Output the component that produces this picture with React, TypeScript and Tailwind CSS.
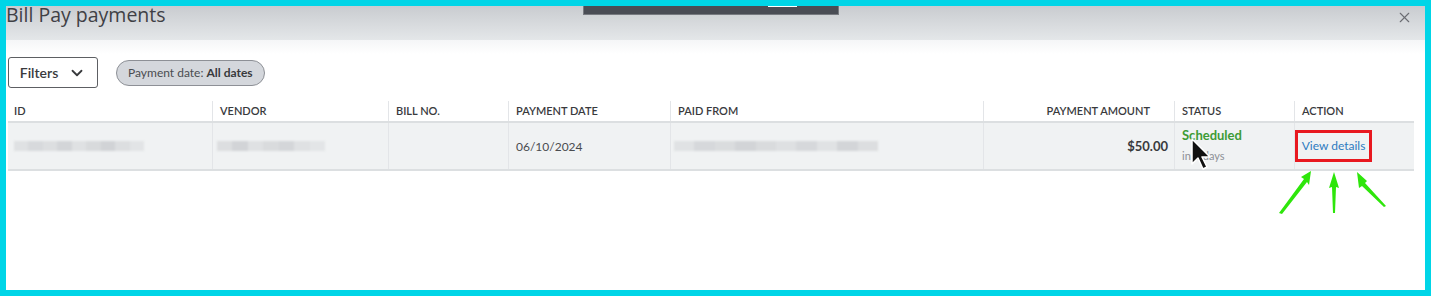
import { X, ChevronDown } from "lucide-react"

const cols = "grid grid-cols-[204px_176px_120px_162px_313px_191px_120px_120px]"

function Blur({ w, shades }: { w: number; shades: string[] }) {
	return (
		<div className="flex h-[10px] blur-[1px]" style={{ width: w }}>
			{shades.map((s, i) => (
				<div key={i} className="h-full flex-1" style={{ backgroundColor: s }} />
			))}
		</div>
	)
}

function Arrows() {
	return (
		<svg className="absolute left-[1264px] top-[160px]" width="130" height="52" viewBox="0 0 130 52">
			<g fill="#2ee60b">
				<path d="M41 5 L31 11 L34 13 L9 47 L12 48 L37 16 L39 19 Z" />
				<path d="M64 6 L59 22 L62 21 L63 47 L65 47 L66 21 L69 22 Z" />
				<path d="M87 6 L89 22 L92 20 L114 41 L116 40 L95 17 L97 15 Z" />
			</g>
		</svg>
	)
}

function Cursor() {
	return (
		<svg className="absolute left-[1184px] top-[132px]" width="24" height="36" viewBox="0 0 24 36">
			<path
				d="M2 1 L2 26 L8 20 L13 31 L17 29 L12 19 L20 19 Z"
				fill="#111"
				stroke="#fff"
				strokeWidth="1.5"
				strokeLinejoin="round"
			/>
		</svg>
	)
}

export default function App() {
	return (
		<div className="w-[1431px] h-[296px] bg-[#00d5e7] p-[6px] font-['Lato','Open_Sans',sans-serif] text-[#393a3d]">
			<div className="relative w-full h-full bg-white overflow-hidden flex flex-col">
				{/* top bar */}
				<div className="h-[34px] shrink-0 bg-gradient-to-b from-[#c9ccd0] to-[#e4e7e9] flex items-start justify-between pr-[12px]">
					<h1 className="text-[19.5px] leading-[20px] -mt-[1px] font-['Open_Sans',sans-serif] text-[#3f4045]">
						Bill Pay payments
					</h1>
					<X className="mt-[3px] w-[17px] h-[17px] text-[#6b6c72]" strokeWidth={1.6} />
				</div>
				<div className="h-[14px] shrink-0 bg-gradient-to-b from-[#f5f6f7] to-white" />

				{/* screen-share bar overlay */}
				<div className="absolute left-[577px] top-0 w-[256px] h-[9px] bg-[#4a4d55] border-x border-b border-[#777a80]">
					<div className="absolute left-[184px] top-0 w-[29px] h-[1px] bg-white" />
				</div>

				{/* filters */}
				<div className="flex items-center gap-[18px] pl-[2px] mt-[3px]">
					<button className="w-[90px] h-[31px] border border-[#5d5f63] rounded-[3px] flex items-center justify-center gap-[10px] text-[14px] font-semibold text-[#393a3d]">
						Filters
						<ChevronDown className="w-[18px] h-[18px]" strokeWidth={2.4} />
					</button>
					<div className="h-[26px] px-[11px] rounded-full bg-[#d4d7dc] border border-[#8d9096] flex items-center text-[12px] text-[#4a4c50]">
						Payment date:&nbsp;<span className="font-bold text-[#393a3d]">All dates</span>
					</div>
				</div>

				{/* table */}
				<div className="ml-[2px] mt-[10px] w-[1406px]">
					<div className={`${cols} h-[25px] pt-[3px] text-[11px] font-semibold text-[#393a3d] border-b-2 border-[#dcdfe1]`}>
						<div className="pl-[6px] flex items-center">ID</div>
						<div className="pl-[7px] flex items-center border-l border-[#e3e5e8]">VENDOR</div>
						<div className="pl-[7px] flex items-center border-l border-[#e3e5e8]">BILL NO.</div>
						<div className="pl-[7px] flex items-center border-l border-[#e3e5e8]">PAYMENT DATE</div>
						<div className="pl-[7px] flex items-center border-l border-[#e3e5e8]">PAID FROM</div>
						<div className="pr-[24px] flex items-center justify-end border-l border-[#e3e5e8]">PAYMENT AMOUNT</div>
						<div className="pl-[7px] flex items-center border-l border-[#e3e5e8]">STATUS</div>
						<div className="pl-[7px] flex items-center border-l border-[#e3e5e8]">ACTION</div>
					</div>
					<div className={`${cols} h-[48px] bg-[#f0f2f3] border-b-2 border-[#dcdfe1] text-[12px]`}>
						<div className="pl-[6px] flex items-center">
							<Blur w={130} shades={["#dfe1e3", "#d7d9dc", "#dcdee0", "#d3d5d8", "#dfe1e3", "#d8dadc", "#d1d3d6", "#dcdee0", "#e2e4e6"]} />
						</div>
						<div className="pl-[4px] flex items-center border-l border-[#e3e5e8]">
							<Blur w={108} shades={["#dcdee0", "#d2d4d7", "#dfe1e3", "#d9dbdd", "#d4d6d9", "#dfe1e3", "#e3e5e7"]} />
						</div>
						<div className="border-l border-[#e3e5e8]" />
						<div className="pl-[7px] pt-[2px] flex items-center border-l border-[#e3e5e8] text-[#4a4c50]">06/10/2024</div>
						<div className="pl-[3px] flex items-center border-l border-[#e3e5e8]">
							<Blur w={204} shades={["#e0e2e4", "#d6d8db", "#dadcde", "#d2d4d7", "#d9dbdd", "#dee0e2", "#d6d8db", "#e0e2e4", "#d3d5d8", "#dcdee0"]} />
						</div>
						<div className="pr-[6px] pt-[2px] flex items-center justify-end border-l border-[#e3e5e8] font-bold text-[13px] text-[#393a3d]">
							$50.00
						</div>
						<div className="pl-[7px] flex flex-col justify-center border-l border-[#e3e5e8]">
							<span className="text-[13px] font-bold text-[#3d9b35] leading-[16px] -mt-[2px]">Scheduled</span>
							<span className="text-[11px] text-[#8d9096] leading-[14px] mt-[6px]">in 4 days</span>
						</div>
						<div className="flex items-center border-l border-[#e3e5e8]">
							<div className="w-[77px] h-[32px] border-[3px] border-[#e8181f] flex items-center justify-center text-[12px] text-[#2e7bc0]">
								View details
							</div>
						</div>
					</div>
				</div>

				<Cursor />
				<Arrows />
			</div>
		</div>
	)
}
